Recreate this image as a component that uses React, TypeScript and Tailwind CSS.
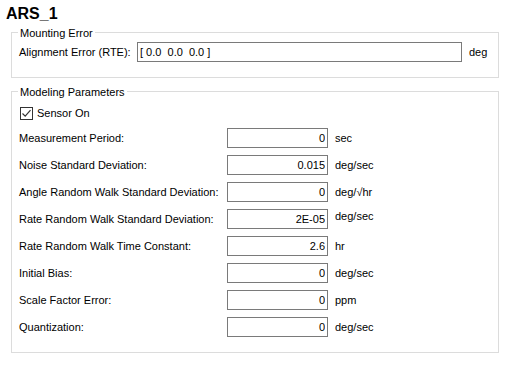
import { useState } from "react";

const params = [
  { label: "Measurement Period:", value: "0", unit: "sec" },
  { label: "Noise Standard Deviation:", value: "0.015", unit: "deg/sec" },
  { label: "Angle Random Walk Standard Deviation:", value: "0", unit: "deg/√hr" },
  { label: "Rate Random Walk Standard Deviation:", value: "2E-05", unit: "deg/sec", raised: true },
  { label: "Rate Random Walk Time Constant:", value: "2.6", unit: "hr" },
  { label: "Initial Bias:", value: "0", unit: "deg/sec" },
  { label: "Scale Factor Error:", value: "0", unit: "ppm" },
  { label: "Quantization:", value: "0", unit: "deg/sec" },
];

const GroupBox = ({ title, className, children }: { title: string; className: string; children: React.ReactNode }) => (
  <div className={`relative ml-[11px] w-[488px] border border-[#dcdcdc] ${className}`}>
    {/* caption sits over the top border */}
    <span className="absolute left-[6px] top-[-6px] bg-white px-[2px] leading-[13px]">{title}</span>
    {children}
  </div>
);

const App = () => {
  const [sensorOn, setSensorOn] = useState(true);

  return (
    <div className="w-[521px] h-[367px] bg-white text-black text-[11px] font-['Liberation_Sans',Arial,sans-serif] overflow-hidden">
      <h1 className="ml-[6px] mt-[4px] text-[16px] font-bold leading-[19px]">ARS_1</h1>

      <GroupBox title="Mounting Error" className="mt-[9px] h-[46px] pl-[7px] pt-[9px]">
        <div className="flex items-center h-[20px]">
          <span className="w-[118px] shrink-0">Alignment Error (RTE):</span>
          <input
            readOnly
            value="[ 0.0  0.0  0.0 ]"
            className="w-[325px] h-[20px] border border-[#7a7a7a] px-[2px] outline-none whitespace-pre"
          />
          <span className="ml-[7px]">deg</span>
        </div>
      </GroupBox>

      <GroupBox title="Modeling Parameters" className="mt-[13px] h-[262px] pl-[7px] pt-[15px]">
        <label className="flex items-center h-[13px] ml-[1px] cursor-default">
          <button
            type="button"
            onClick={() => setSensorOn(!sensorOn)}
            className="w-[13px] h-[13px] border border-[#333] bg-white flex items-center justify-center"
          >
            {sensorOn && (
              <svg width="11" height="11" viewBox="0 0 11 11">
                <path d="M1.5 5.5 L4.2 8.2 L9.5 2.2" fill="none" stroke="#333" strokeWidth="1.2" />
              </svg>
            )}
          </button>
          <span className="ml-[4px]">Sensor On</span>
        </label>

        <div className="mt-[8px] flex flex-col gap-[7px]">
          {params.map((p) => (
            <div key={p.label} className="flex items-center h-[20px]">
              <span className="w-[208px] shrink-0">{p.label}</span>
              <input
                readOnly
                value={p.value}
                className="w-[101px] h-[20px] border border-[#7a7a7a] pr-[2px] text-right outline-none"
              />
              <span className={`ml-[7px] ${p.raised ? "mb-[5px]" : ""}`}>{p.unit}</span>
            </div>
          ))}
        </div>
      </GroupBox>
    </div>
  );
};

export default App;
